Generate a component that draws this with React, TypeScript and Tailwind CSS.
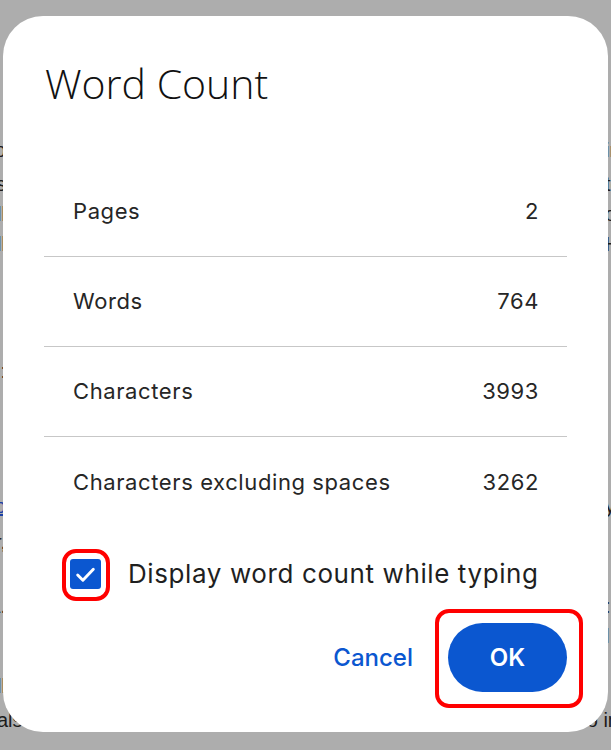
import React from 'react';

type Line = { cls: string; left: string; right: string; link?: boolean };

// fragments of the document text that peek out around the dialog
const lines: Line[] = [
  { cls: 'mt-[140px]', left: 'to', right: 'in' },
  { cls: 'mt-[14px]', left: 'is', right: 'to' },
  { cls: 'mt-[10px]', left: 'all', right: 'of' },
  { cls: 'mt-[10px]', left: 'will', right: 'He' },
  { cls: 'mt-[107px]', left: 'e:', right: '' },
  { cls: 'mt-[115px]', left: 'to', right: 'y', link: true },
  { cls: 'mt-[16px]', left: 'r,', right: '' },
  { cls: 'mt-[44px]', left: 'a.', right: ':' },
  { cls: 'mt-[10px]', left: '', right: 'l' },
  { cls: 'mt-[30px]', left: 'll', right: '' },
];

const Check = () => (
  <svg viewBox="0 0 24 24" className="w-[25px] h-[25px]" fill="none">
    <path d="M4.5 12.5l5 5L19.5 7" stroke="#fff" strokeWidth="2.8" strokeLinecap="round" strokeLinejoin="round" />
  </svg>
);

export default function App() {
  const rows = [
    ['Pages', '2'],
    ['Words', '764'],
    ['Characters', '3993'],
    ['Characters excluding spaces', '3262'],
  ];

  return (
    <div className="relative h-[750px] w-[611px] overflow-hidden bg-[#adadad] font-['Liberation_Sans',Arial,sans-serif] text-[#1c1c1c]">
      {/* dimmed document behind the dialog */}
      <div className="flex flex-col">
        {lines.map((l, i) => (
          <div key={i} className={`${l.cls} flex h-[20px] items-center justify-between text-[20px] leading-[20px]`}>
            <span className={`-ml-[40px] w-[46px] text-right ${l.link ? 'text-[#1a3fa6] underline' : ''}`}>{l.left}</span>
            <span className="-mr-[40px] w-[46px] text-left">{l.right}</span>
          </div>
        ))}
        <div className="mt-[14px] flex h-[20px] items-center justify-between text-[20px] leading-[20px]">
          <span className="-ml-[3px]">als</span>
          <span className="-mr-[8px]">o in</span>
        </div>
      </div>

      {/* word count dialog */}
      <div className="absolute left-[3px] top-[16px] h-[716px] w-[605px] rounded-[40px] bg-white px-[41px] font-['Inter',sans-serif] text-[#1f1f1f]">
        <h1 className="mt-[42px] ml-[1px] font-['Open_Sans',sans-serif] text-[41px] font-light leading-[50px] text-[#111]">
          Word Count
        </h1>

        <div className="mt-[59px] flex flex-col">
          {rows.map(([label, value], i) => (
            <div
              key={label}
              className={`flex h-[90px] items-center justify-between px-[29px] text-[22px] tracking-[0.6px] text-[#262626] ${i < rows.length - 1 ? 'border-b border-[#c7c7c7]' : ''}`}
            >
              <span>{label}</span>
              <span className="-mr-[1px]">{value}</span>
            </div>
          ))}
        </div>

        <label className="mt-[32px] ml-[26px] flex items-center gap-[27px]">
          <span className="relative flex h-[30px] w-[31px] items-center justify-center rounded-[3px] bg-[#0b57d0]">
            <Check />
            <span className="absolute -left-[8px] -right-[9px] -top-[10px] -bottom-[12px] rounded-[14px] border-[4px] border-[#ff0000]" />
          </span>
          <span className="text-[26px] leading-[30px] tracking-[0.6px] text-[#1f1f1f]">Display word count while typing</span>
        </label>

        <div className="mt-[34px] flex items-center justify-end gap-[35px]">
          <button className="text-[24px] font-medium text-[#0b57d0]">Cancel</button>
          <div className="relative">
            <button className="flex h-[69px] w-[119px] items-center justify-center rounded-full bg-[#0b57d0] text-[24px] font-semibold text-white">
              OK
            </button>
            <span className="absolute -left-[13px] -right-[16px] -top-[14px] -bottom-[16px] rounded-[14px] border-[4px] border-[#ff0000]" />
          </div>
        </div>
      </div>
    </div>
  );
}
